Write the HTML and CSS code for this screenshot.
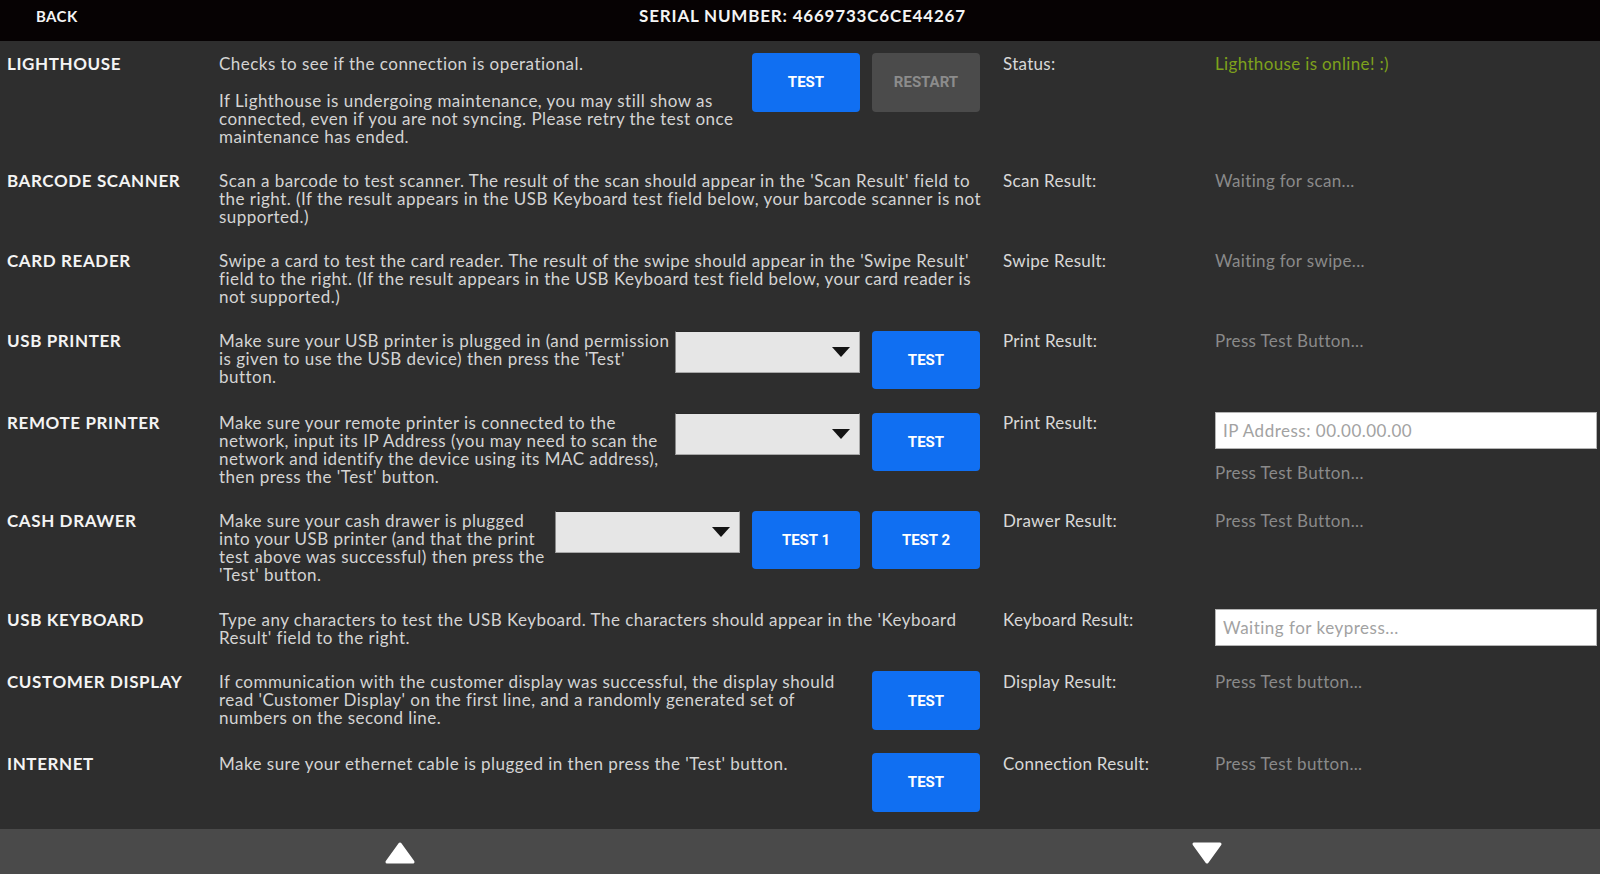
FILE: index.html
```html
<!DOCTYPE html>
<html lang="en">
<head>
<meta charset="utf-8">
<title>Hardware Test</title>
<link rel="stylesheet" href="styles.css">
</head>
<body>
<div class="app">
  <header class="topbar">
    <div class="back">BACK</div>
    <div class="serial">SERIAL NUMBER: 4669733C6CE44267</div>
    <div class="spacer"></div>
  </header>

  <main class="tests">
    <section class="row">
      <div class="name">LIGHTHOUSE</div>
      <div class="body">
        <div class="desc">
          <p>Checks to see if the connection is operational.</p>
          <p>If Lighthouse is undergoing maintenance, you may still show as<br>connected, even if you are not syncing. Please retry the test once<br>maintenance has ended.</p>
        </div>
        <div class="controls">
          <button class="btn">TEST</button>
          <button class="btn btn-muted">RESTART</button>
        </div>
      </div>
      <div class="rlabel">Status:</div>
      <div class="rvalue rvalue-ok">Lighthouse is online! :)</div>
    </section>

    <section class="row">
      <div class="name">BARCODE SCANNER</div>
      <div class="body">
        <div class="desc">
          <p>Scan a barcode to test scanner. The result of the scan should appear in the 'Scan Result' field to<br>the right. (If the result appears in the USB Keyboard test field below, your barcode scanner is not<br>supported.)</p>
        </div>
      </div>
      <div class="rlabel">Scan Result:</div>
      <div class="rvalue">Waiting for scan...</div>
    </section>

    <section class="row">
      <div class="name">CARD READER</div>
      <div class="body">
        <div class="desc">
          <p>Swipe a card to test the card reader. The result of the swipe should appear in the 'Swipe Result'<br>field to the right. (If the result appears in the USB Keyboard test field below, your card reader is<br>not supported.)</p>
        </div>
      </div>
      <div class="rlabel">Swipe Result:</div>
      <div class="rvalue">Waiting for swipe...</div>
    </section>

    <section class="row">
      <div class="name">USB PRINTER</div>
      <div class="body">
        <div class="desc">
          <p>Make sure your USB printer is plugged in (and permission<br>is given to use the USB device) then press the 'Test'<br>button.</p>
        </div>
        <div class="controls">
          <div class="select"><svg class="caret" viewBox="0 0 18 10" width="18" height="10"><path d="M0 0H18L9 10Z"/></svg></div>
          <button class="btn">TEST</button>
        </div>
      </div>
      <div class="rlabel">Print Result:</div>
      <div class="rvalue">Press Test Button...</div>
    </section>

    <section class="row">
      <div class="name">REMOTE PRINTER</div>
      <div class="body">
        <div class="desc">
          <p>Make sure your remote printer is connected to the<br>network, input its IP Address (you may need to scan the<br>network and identify the device using its MAC address),<br>then press the 'Test' button.</p>
        </div>
        <div class="controls">
          <div class="select"><svg class="caret" viewBox="0 0 18 10" width="18" height="10"><path d="M0 0H18L9 10Z"/></svg></div>
          <button class="btn">TEST</button>
        </div>
      </div>
      <div class="rlabel">Print Result:</div>
      <div class="rvalue rvalue-field">
        <input class="field" type="text" placeholder="IP Address: 00.00.00.00">
        <div class="field-note">Press Test Button...</div>
      </div>
    </section>

    <section class="row">
      <div class="name">CASH DRAWER</div>
      <div class="body">
        <div class="desc">
          <p>Make sure your cash drawer is plugged<br>into your USB printer (and that the print<br>test above was successful) then press the<br>'Test' button.</p>
        </div>
        <div class="controls">
          <div class="select"><svg class="caret" viewBox="0 0 18 10" width="18" height="10"><path d="M0 0H18L9 10Z"/></svg></div>
          <button class="btn">TEST 1</button>
          <button class="btn">TEST 2</button>
        </div>
      </div>
      <div class="rlabel">Drawer Result:</div>
      <div class="rvalue">Press Test Button...</div>
    </section>

    <section class="row">
      <div class="name">USB KEYBOARD</div>
      <div class="body">
        <div class="desc">
          <p>Type any characters to test the USB Keyboard. The characters should appear in the 'Keyboard<br>Result' field to the right.</p>
        </div>
      </div>
      <div class="rlabel">Keyboard Result:</div>
      <div class="rvalue rvalue-field">
        <input class="field field-kb" type="text" placeholder="Waiting for keypress...">
      </div>
    </section>

    <section class="row">
      <div class="name">CUSTOMER DISPLAY</div>
      <div class="body">
        <div class="desc">
          <p>If communication with the customer display was successful, the display should<br>read 'Customer Display' on the first line, and a randomly generated set of<br>numbers on the second line.</p>
        </div>
        <div class="controls">
          <button class="btn">TEST</button>
        </div>
      </div>
      <div class="rlabel">Display Result:</div>
      <div class="rvalue">Press Test button...</div>
    </section>

    <section class="row">
      <div class="name">INTERNET</div>
      <div class="body">
        <div class="desc">
          <p>Make sure your ethernet cable is plugged in then press the 'Test' button.</p>
        </div>
        <div class="controls">
          <button class="btn">TEST</button>
        </div>
      </div>
      <div class="rlabel">Connection Result:</div>
      <div class="rvalue">Press Test button...</div>
    </section>
  </main>

  <footer class="pager">
    <div class="pager-cell">
      <svg class="arrow" viewBox="0 0 32 24" width="32" height="24"><path d="M16 3L29 21H3Z"/></svg>
    </div>
    <div class="pager-cell pager-cell-right">
      <svg class="arrow" viewBox="0 0 32 24" width="32" height="24"><path d="M3 3H29L16 21Z"/></svg>
    </div>
  </footer>
</div>
</body>
</html>
```

FILE: styles.css
```css
* { box-sizing: border-box; }

html, body {
  margin: 0;
  padding: 0;
  height: 100%;
}

body {
  background: #2e2e2e;
  font-family: Lato, "Open Sans", sans-serif;
  color: #d4d4d4;
  overflow: hidden;
}

.app {
  display: flex;
  flex-direction: column;
  height: 874px;
}

/* top bar */
.topbar {
  flex: none;
  height: 41px;
  background: #060203;
  display: grid;
  grid-template-columns: 1fr auto 1fr;
  align-items: start;
  padding: 7px 31px 0 36px;
  color: #f4f4f4;
  font-weight: 700;
  line-height: 18px;
}

.back {
  font-size: 15px;
  letter-spacing: 0.4px;
}

.serial {
  font-size: 17px;
  letter-spacing: 0.8px;
}

/* rows */
.tests {
  flex: 1;
  background: #2e2e2e;
}

.row {
  display: grid;
  grid-template-columns: 212px 784px 212px 1fr;
  align-items: start;
  padding: 12px 3px 11.25px 7px;
}

.name {
  padding-top: 1.5px;
  color: #f4f4f4;
  font-weight: 700;
  font-size: 17px;
  line-height: 18px;
  letter-spacing: 0.6px;
}

.body {
  display: flex;
  align-items: flex-start;
  gap: 12px;
  padding-right: 23px;
}

.desc {
  flex: 1;
  min-width: 0;
  padding: 1.5px 0 1.5px;
  font-size: 17px;
  line-height: 18px;
  letter-spacing: 0.47px;
  color: #d4d4d4;
  white-space: nowrap;
}

.desc p {
  margin: 0 0 19px;
}

.desc p:last-child {
  margin-bottom: 0;
}

.controls {
  flex: none;
  display: flex;
  gap: 12px;
}

.btn {
  width: 108px;
  height: 58.5px;
  border: 0;
  border-radius: 4px;
  background: #106ff2;
  color: #ffffff;
  font-family: Roboto, "Liberation Sans", sans-serif;
  font-weight: 700;
  font-size: 15px;
  padding: 0;
}

.btn-muted {
  background: #4b4b4b;
  color: #8c8c8c;
}

.select {
  width: 185px;
  height: 42px;
  background: #e6e6e6;
  border: 1px solid #a8a8a8;
  border-top-color: #2a2a2a;
  border-left-color: #8a8a8a;
  display: flex;
  align-items: center;
  justify-content: flex-end;
  padding-right: 9px;
}

.caret {
  display: block;
  fill: #141414;
}

.rlabel {
  padding-top: 1.5px;
  font-size: 17px;
  line-height: 18px;
  letter-spacing: 0.3px;
  color: #d8d8d8;
}

.rvalue {
  padding-top: 1.5px;
  font-size: 17px;
  line-height: 18px;
  letter-spacing: 0.35px;
  color: #8a8a8a;
}

.rvalue-field {
  padding-top: 0;
}

.rvalue-ok {
  color: #7ea11c;
}

.field {
  display: block;
  width: 100%;
  height: 37px;
  margin: -1px 0 0;
  border: 1px solid #b4b4b4;
  background: #ffffff;
  padding: 0 7px;
  font-family: Lato, "Open Sans", sans-serif;
  font-size: 17px;
  letter-spacing: 0.5px;
  color: #333;
  outline: none;
}

.field::placeholder {
  color: #a2a2a2;
}

.field-kb {
  margin-top: 0;
}

.field-note {
  margin-top: 15px;
}

/* footer */
.pager {
  flex: none;
  height: 45px;
  background: #4a4a4a;
  display: grid;
  grid-template-columns: 1fr 1fr;
}

.pager-cell {
  display: flex;
  justify-content: center;
  padding-top: 12px;
}

.pager-cell-right {
  padding-left: 14px;
}

.arrow {
  display: block;
  fill: #ffffff;
  stroke: #ffffff;
  stroke-width: 3;
  stroke-linejoin: round;
}
```
